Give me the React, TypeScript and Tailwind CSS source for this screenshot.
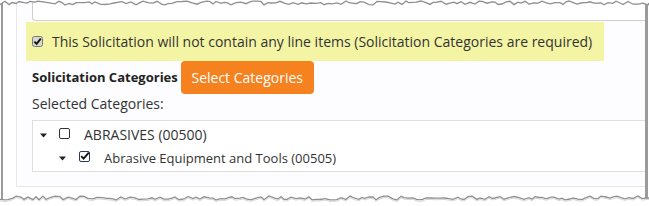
import React from "react";

// jagged "torn paper" line, deterministic
function tornPoints(width: number, base: number, amp: number, seed: number) {
  const pts: [number, number][] = [];
  let s = seed;
  const rnd = () => {
    s = (s * 9301 + 49297) % 233280;
    return s / 233280;
  };
  for (let x = 0; x <= width; x += 3 + Math.floor(rnd() * 3)) {
    pts.push([x, base + (rnd() - 0.5) * amp]);
  }
  pts.push([width, base]);
  return pts;
}

function TornEdge({ top }: { top: boolean }) {
  const pts = tornPoints(649, top ? 3 : 6, 4, top ? 17 : 91);
  const line = pts.map(([x, y]) => `${x},${y.toFixed(1)}`).join(" ");
  const fill = top
    ? `0,0 ${line} 649,0`
    : `0,14 ${line} 649,14`;
  return (
    <svg
      className={`absolute left-0 ${top ? "top-0" : "bottom-0"}`}
      width="649"
      height="14"
      viewBox="0 0 649 14"
    >
      <polygon points={fill} fill="#ffffff" />
      <polyline points={line} fill="none" stroke="#8f8f8f" strokeWidth="1.3" />
      {!top && <polyline points={line} transform="translate(0,1.5)" fill="none" stroke="#d6d6d6" strokeWidth="1" />}
    </svg>
  );
}

function Caret() {
  return (
    <svg width="7" height="5" viewBox="0 0 7 5" className="shrink-0">
      <path d="M0 0.5 L7 0.5 L3.5 4.5 Z" fill="#222" />
    </svg>
  );
}

function TreeBox({ checked }: { checked: boolean }) {
  return (
    <svg width="11" height="11" viewBox="0 0 11 11" className="shrink-0 -mt-[3px]">
      <rect x="0.5" y="0.5" width="10" height="10" rx="1.5" fill="#fff" stroke={checked ? "#2b3a55" : "#333"} strokeWidth="1" />
      {checked && <path d="M2.2 5.2 L4.6 7.6 L9.8 1.6" fill="none" stroke="#111" strokeWidth="1.8" />}
    </svg>
  );
}

export default function App() {
  return (
    <div className="relative w-[649px] h-[206px] overflow-hidden bg-white font-['Open_Sans',sans-serif] text-[#333]">
      <div className="ml-[1px] w-[647px] h-[200px] border-l-2 border-r-[3px] border-[#9b9b9b] overflow-hidden">
        <div className="ml-[13px] w-[700px] border-l border-b border-[#e8e8ec] bg-[#fdfcfe] pl-[15px] pb-[14px]">
          <div className="w-[640px] h-[21px] border-l border-b border-[#cfcfcf] rounded-bl-[4px] bg-white" />

          <div className="mt-[1px] -ml-[6px] w-[578px] h-[39px] bg-[#f3f5a5] flex items-center pl-[6px] gap-[9px]">
            <svg width="11" height="11" viewBox="0 0 11 11" className="shrink-0">
              <rect x="0.5" y="0.5" width="10" height="10" rx="2" fill="#d9d9cf" stroke="#7a7a72" strokeWidth="1" />
              <path d="M2.4 5.6 L4.6 7.8 L8.8 2.6" fill="none" stroke="#111" strokeWidth="1.9" />
            </svg>
            <span className="text-[14px] leading-[18px]">
              This Solicitation will not contain any line items (Solicitation Categories are required)
            </span>
          </div>

          <div className="flex items-center h-[33px]">
            <span className="text-[13px] font-bold text-[#222]">Solicitation Categories</span>
            <button className="ml-[3px] w-[133px] h-[33px] rounded-[4px] bg-[#f5821f] text-white text-[14px] leading-none">
              Select Categories
            </button>
          </div>

          <div className="mt-[1px] h-[18px] text-[14px] leading-[18px]">Selected Categories:</div>

          <div className="mt-[7px] h-[52px] border border-[#dedede] bg-white pt-[4px] flex flex-col gap-[3px]">
            <div className="h-[20px] flex items-center pl-[7px]">
              <Caret />
              <span className="ml-[12px]"><TreeBox checked={false} /></span>
              <span className="ml-[14px] text-[14px] leading-[20px]">ABRASIVES (00500)</span>
            </div>
            <div className="h-[20px] flex items-center pl-[26px]">
              <Caret />
              <span className="ml-[13px]"><TreeBox checked={true} /></span>
              <span className="ml-[14px] text-[13px] leading-[20px]">Abrasive Equipment and Tools (00505)</span>
            </div>
          </div>
        </div>
      </div>
      <TornEdge top={true} />
      <TornEdge top={false} />
    </div>
  );
}
